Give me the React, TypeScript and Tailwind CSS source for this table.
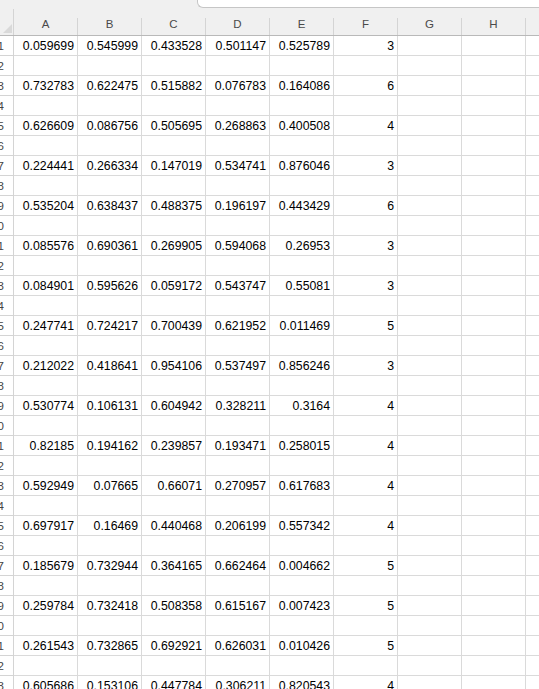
const cols = ['A', 'B', 'C', 'D', 'E', 'F', 'G', 'H', '']

const data = [
  ['0.059699', '0.545999', '0.433528', '0.501147', '0.525789', '3'],
  ['0.732783', '0.622475', '0.515882', '0.076783', '0.164086', '6'],
  ['0.626609', '0.086756', '0.505695', '0.268863', '0.400508', '4'],
  ['0.224441', '0.266334', '0.147019', '0.534741', '0.876046', '3'],
  ['0.535204', '0.638437', '0.488375', '0.196197', '0.443429', '6'],
  ['0.085576', '0.690361', '0.269905', '0.594068', '0.26953', '3'],
  ['0.084901', '0.595626', '0.059172', '0.543747', '0.55081', '3'],
  ['0.247741', '0.724217', '0.700439', '0.621952', '0.011469', '5'],
  ['0.212022', '0.418641', '0.954106', '0.537497', '0.856246', '3'],
  ['0.530774', '0.106131', '0.604942', '0.328211', '0.3164', '4'],
  ['0.82185', '0.194162', '0.239857', '0.193471', '0.258015', '4'],
  ['0.592949', '0.07665', '0.66071', '0.270957', '0.617683', '4'],
  ['0.697917', '0.16469', '0.440468', '0.206199', '0.557342', '4'],
  ['0.185679', '0.732944', '0.364165', '0.662464', '0.004662', '5'],
  ['0.259784', '0.732418', '0.508358', '0.615167', '0.007423', '5'],
  ['0.261543', '0.732865', '0.692921', '0.626031', '0.010426', '5'],
  ['0.605686', '0.153106', '0.447784', '0.306211', '0.820543', '4'],
]

const rows = Array.from({ length: 34 }, (_, i) => i + 1)

export default function App() {
  return (
    <div className="w-[539px] h-[689px] overflow-hidden bg-white font-['Liberation_Sans',Arial,sans-serif]">
      {/* top strip */}
      <div className="flex h-[9px] bg-[#f0f0f0]">
        <div className="w-[197px] shrink-0" />
        <div className="flex-1 h-[8px] bg-white border-l border-b border-[#c6c6c6] rounded-bl-[6px]" />
      </div>

      {/* column headers */}
      <div className="flex h-[27px] bg-[#f0f0f0] border-b border-[#b9b9b9]">
        <div className="w-[14px] shrink-0 flex items-end justify-end pb-[2px] pr-[1px] border-r border-[#d4d4d4]">
          <svg width="9" height="9" viewBox="0 0 9 9">
            <polygon points="9,0 9,9 0,9" fill="#d9d9d9" />
          </svg>
        </div>
        {cols.map((c, i) => (
          <div key={i} className="flex shrink-0">
            <div className="w-[63px] flex items-center justify-center pt-[6px] text-[11.5px] text-[#4a4a4a]">
              {c}
            </div>
            <div className="w-px h-[17px] self-end bg-[#d4d4d4]" />
          </div>
        ))}
      </div>

      {/* rows */}
      {rows.map((r) => {
        const vals = r % 2 === 1 ? data[(r - 1) / 2] : null
        return (
          <div key={r} className="flex h-5 shrink-0">
            <div className="w-[14px] shrink-0 flex items-center justify-end pr-[9px] pt-[2px] border-r border-b border-[#d4d4d4] text-[11.5px] text-[#444]">
              {r}
            </div>
            {cols.map((c, i) => (
              <div
                key={c + i}
                className="w-16 shrink-0 flex items-center justify-end pr-[3px] pt-[2px] border-r border-b border-[#dadada] text-[12.3px] text-black"
              >
                {vals && i < 6 ? vals[i] : ''}
              </div>
            ))}
          </div>
        )
      })}
    </div>
  )
}
